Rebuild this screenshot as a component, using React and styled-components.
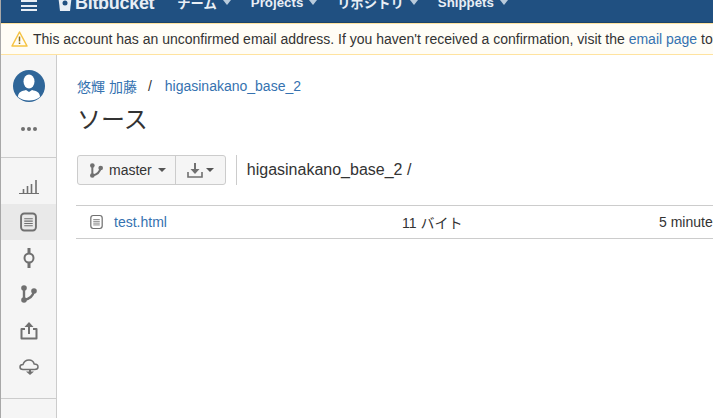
import React from "react";
import styled, { createGlobalStyle } from "styled-components";

const GlobalStyle = createGlobalStyle`
  html, body {
    margin: 0;
    padding: 0;
    height: 100%;
    overflow: hidden;
    background: #fff;
    font-family: "Liberation Sans", "Noto Sans CJK JP", sans-serif;
  }
`;

const Page = styled.div`
  width: 713px;
  height: 418px;
  display: flex;
  flex-direction: column;
  overflow: hidden;
  border-left: 1px solid #a8a8a8;
  box-sizing: border-box;
`;

const TopBar = styled.header`
  height: 23px;
  flex: none;
  background: #205081;
  display: flex;
  align-items: flex-end;
  overflow: hidden;
  color: #fff;
  white-space: nowrap;
  box-sizing: border-box;
  border-bottom: 1px solid #1b4369;
`;

const Burger = styled.span`
  width: 16px;
  height: 11px;
  margin: 0 0 11px 20px;
  flex: none;
  border-top: 2px solid #e8eef5;
  border-bottom: 2px solid #e8eef5;
  box-sizing: border-box;
  position: relative;
  &::after {
    content: "";
    position: absolute;
    left: 0;
    right: 0;
    top: 2.5px;
    height: 2px;
    background: #e8eef5;
  }
`;

const Logo = styled.span`
  display: flex;
  flex: none;
  align-items: center;
  margin: 0 23px 9px 21px;
  height: 20px;
  font-size: 18px;
  font-weight: 700;
  letter-spacing: -0.3px;
  gap: 3px;
  color: #e8eef5;
`;

const NavItem = styled.span`
  display: flex;
  flex: none;
  align-items: center;
  gap: 6px;
  height: 20px;
  margin: 0 ${(p) => p.$gap}px 10px 0;
  font-size: 13.3px;
  font-weight: 700;
  color: #e8eef5;
  &::after {
    content: "";
    border-top: 5px solid #b9cbdc;
    border-left: 4px solid transparent;
    border-right: 4px solid transparent;
  }
`;

const Banner = styled.div`
  height: 32px;
  flex: none;
  box-sizing: border-box;
  background: #fffdf6;
  border-top: 1px solid #ffe39f;
  border-bottom: 1px solid #ffe39f;
  display: flex;
  align-items: center;
  padding-left: 10px;
  gap: 5px;
  font-size: 14px;
  color: #333;
  white-space: nowrap;
  overflow: hidden;
  svg {
    flex: none;
  }
`;

const Body = styled.div`
  flex: 1;
  display: flex;
  min-height: 0;
`;

const Sidebar = styled.nav`
  width: 56px;
  flex: none;
  box-sizing: border-box;
  background: #f5f5f5;
  border-right: 1px solid #ccc;
  display: flex;
  flex-direction: column;
`;

const AccountBlock = styled.div`
  height: 103px;
  flex: none;
  box-sizing: border-box;
  border-bottom: 1px solid #ccc;
  display: flex;
  flex-direction: column;
  align-items: center;
  padding: 15px 0 0;
`;

const Dots = styled.div`
  display: flex;
  gap: 2px;
  margin-top: 25px;
  span {
    width: 4px;
    height: 4px;
    border-radius: 50%;
    background: #707070;
  }
`;

const SideLinks = styled.div`
  height: 241px;
  flex: none;
  box-sizing: border-box;
  border-bottom: 1px solid #ccc;
  display: flex;
  flex-direction: column;
  padding-top: 10px;
`;

const SideLink = styled.div`
  height: ${(p) => p.$h}px;
  flex: none;
  display: flex;
  align-items: center;
  justify-content: center;
  background: ${(p) => (p.$active ? "#e9e9e9" : "transparent")};
`;

const Main = styled.main`
  flex: 1;
  min-width: 0;
  padding: 21px 0 0 20px;
`;

const Crumbs = styled.div`
  display: flex;
  align-items: center;
  height: 20px;
  font-size: 14px;
  color: #333;
  white-space: nowrap;
`;

const Link = styled.a`
  color: #3572b0;
  text-decoration: none;
`;

const Slash = styled.span`
  margin: 0 13px 0 11px;
`;

const Title = styled.h1`
  margin: 8px 0 0;
  height: 32px;
  font-size: 24px;
  line-height: 32px;
  font-weight: 400;
  color: #333;
`;

const Toolbar = styled.div`
  display: flex;
  align-items: center;
  margin-top: 19px;
  height: 30px;
`;

const ButtonGroup = styled.div`
  display: flex;
  height: 30px;
  box-sizing: border-box;
  border: 1px solid #ccc;
  border-radius: 3px;
  background: #f5f5f5;
`;

const GroupButton = styled.button`
  display: flex;
  align-items: center;
  gap: ${(p) => p.$gap}px;
  padding: 0 ${(p) => p.$right}px 0 ${(p) => p.$left}px;
  border: 0;
  border-right: ${(p) => (p.$divided ? "1px solid #ccc" : "0")};
  background: none;
  font: inherit;
  font-size: 14px;
  color: #333;
`;

const Caret = styled.span`
  border-top: 4px solid #555;
  border-left: 4px solid transparent;
  border-right: 4px solid transparent;
  margin-left: ${(p) => p.$left || 0}px;
`;

const PathDivider = styled.span`
  width: 1px;
  height: 30px;
  background: #ccc;
  margin: 0 10px;
`;

const RepoPath = styled.div`
  font-size: 16px;
  color: #333;
  white-space: nowrap;
`;

const FileTable = styled.div`
  margin: 20px 0 0 -1px;
  height: 34px;
  box-sizing: border-box;
  border-top: 1px solid #ccc;
  border-bottom: 1px solid #ccc;
  display: grid;
  grid-template-columns: 326px 257px 60px;
  align-items: center;
  font-size: 14px;
  color: #333;
  white-space: nowrap;
  overflow: hidden;
  width: 637px;
`;

const NameCell = styled.div`
  display: flex;
  align-items: center;
  gap: 11px;
  padding-left: 14px;
`;

const stroke = { fill: "none", stroke: "#707070", strokeWidth: 2 };

const PageIcon = ({ w, h, weight }) => (
  <svg width={w} height={h} viewBox="0 0 16 18">
    <rect x="1" y="1" width="14" height="16" rx="3" {...stroke} strokeWidth={weight} />
    <path d="M4 6h8M4 8.200h8M4 10.400h8M4 12.600h8" stroke="#707070" strokeWidth="1" />
  </svg>
);

const BranchIcon = ({ size, color = "#707070" }) => (
  <svg width={size} height={size} viewBox="0 0 18 18">
    <circle cx="4" cy="3" r="2.800" fill={color} />
    <circle cx="4" cy="15" r="2.800" fill={color} />
    <circle cx="14" cy="6" r="2.800" fill={color} />
    <path d="M4 3v12M4 15c6-1 9-4 10-9" fill="none" stroke={color} strokeWidth="2.400" />
  </svg>
);

const Avatar = () => (
  <svg width="32" height="32" viewBox="0 0 32 32">
    <circle cx="16" cy="16" r="16" fill="#2f6699" />
    <ellipse cx="16" cy="11.500" rx="5.500" ry="7" fill="#fff" />
    <path d="M5 27c0-5 4-6 8-7l3 2 3-2c4 1 8 2 8 7-3 2.500-7 3.500-11 3.500S8 29.500 5 27z" fill="#fff" />
  </svg>
);

const StatsIcon = () => (
  <svg width="20" height="15" viewBox="0 0 20 15">
    <path d="M0 14.500h20" stroke="#707070" strokeWidth="1" />
    <path d="M4.500 14V10M8.500 14V7M12.500 14V5M17 14V1" stroke="#707070" strokeWidth="1.600" />
  </svg>
);

const CommitIcon = () => (
  <svg width="12" height="20" viewBox="0 0 12 20">
    <circle cx="6" cy="10" r="4.500" {...stroke} />
    <path d="M6 0v5M6 15v5" stroke="#707070" strokeWidth="3" />
  </svg>
);

const UploadIcon = () => (
  <svg width="18" height="18" viewBox="0 0 18 18">
    <path d="M5 7H1.500v9.500h15V7H13" {...stroke} strokeLinejoin="round" />
    <path d="M9 12V3" stroke="#707070" strokeWidth="2" />
    <path d="M4.500 5L9 0l4.500 5z" fill="#707070" />
  </svg>
);

const CloudIcon = () => (
  <svg width="20" height="16" viewBox="0 0 20 16">
    <path
      d="M4 10.500C2 10.500 1 9.500 1 8s1.300-2.500 3-2.500C5 2.500 7.500 1 10 1s4.500 1.500 5.200 4C17.500 5 19 6 19 8s-1.500 2.500-3.500 2.500z"
      {...stroke}
      strokeWidth="1.500"
    />
    <path d="M11 10v3" stroke="#707070" strokeWidth="2" />
    <path d="M7 12.500h8L11 16z" fill="#707070" />
  </svg>
);

const DownloadIcon = () => (
  <svg width="16" height="16" viewBox="0 0 16 16">
    <path d="M1 10v5h14v-5" fill="none" stroke="#707070" strokeWidth="1.600" />
    <path d="M8 1v7" stroke="#707070" strokeWidth="2" />
    <path d="M3.500 7h9L8 12z" fill="#707070" />
  </svg>
);

const WarningIcon = () => (
  <svg width="17" height="16" viewBox="0 0 17 16">
    <path d="M8.500 1L16 15H1z" fill="#fffdf6" stroke="#f6c342" strokeWidth="1.500" strokeLinejoin="round" />
    <path d="M8.500 5.500v5" stroke="#8a6d1c" strokeWidth="1.500" />
    <path d="M8.500 11.500v1.500" stroke="#8a6d1c" strokeWidth="1.500" />
  </svg>
);

const BucketIcon = () => (
  <svg width="14" height="20" viewBox="0 0 14 20">
    <path d="M0 1h14l-2 17H2z" fill="#e8eef5" />
    <circle cx="7" cy="10" r="2.500" fill="#205081" />
  </svg>
);

export default function App() {
  return (
    <>
      <GlobalStyle />
      <Page>
        <TopBar>
          <Burger />
          <Logo>
            <BucketIcon />
            Bitbucket
          </Logo>
          <NavItem $gap={20}>チーム</NavItem>
          <NavItem $gap={20}>Projects</NavItem>
          <NavItem $gap={20}>リポジトリ</NavItem>
          <NavItem $gap={0}>Snippets</NavItem>
        </TopBar>
        <Banner>
          <WarningIcon />
          <span>
            This account has an unconfirmed email address. If you haven't received a confirmation, visit the{" "}
            <Link href="#">email page</Link> to resend it.
          </span>
        </Banner>
        <Body>
          <Sidebar>
            <AccountBlock>
              <Avatar />
              <Dots>
                <span />
                <span />
                <span />
              </Dots>
            </AccountBlock>
            <SideLinks>
              <SideLink $h={36}>
                <StatsIcon />
              </SideLink>
              <SideLink $h={36} $active>
                <PageIcon w={17} h={20} weight={1.8} />
              </SideLink>
              <SideLink $h={36}>
                <CommitIcon />
              </SideLink>
              <SideLink $h={36}>
                <BranchIcon size={18} />
              </SideLink>
              <SideLink $h={38}>
                <UploadIcon />
              </SideLink>
              <SideLink $h={34}>
                <CloudIcon />
              </SideLink>
            </SideLinks>
          </Sidebar>
          <Main>
            <Crumbs>
              <Link href="#">悠輝 加藤</Link>
              <Slash>/</Slash>
              <Link href="#">higasinakano_base_2</Link>
            </Crumbs>
            <Title>ソース</Title>
            <Toolbar>
              <ButtonGroup>
                <GroupButton $left={11} $right={9} $gap={5} $divided>
                  <BranchIcon size={15} />
                  master
                  <Caret $left={1} />
                </GroupButton>
                <GroupButton $left={11} $right={11} $gap={3}>
                  <DownloadIcon />
                  <Caret />
                </GroupButton>
              </ButtonGroup>
              <PathDivider />
              <RepoPath>higasinakano_base_2 /</RepoPath>
            </Toolbar>
            <FileTable>
              <NameCell>
                <PageIcon w={13} h={16} weight={1.5} />
                <Link href="#">test.html</Link>
              </NameCell>
              <div>11 バイト</div>
              <div>5 minutes ago</div>
            </FileTable>
          </Main>
        </Body>
      </Page>
    </>
  );
}
